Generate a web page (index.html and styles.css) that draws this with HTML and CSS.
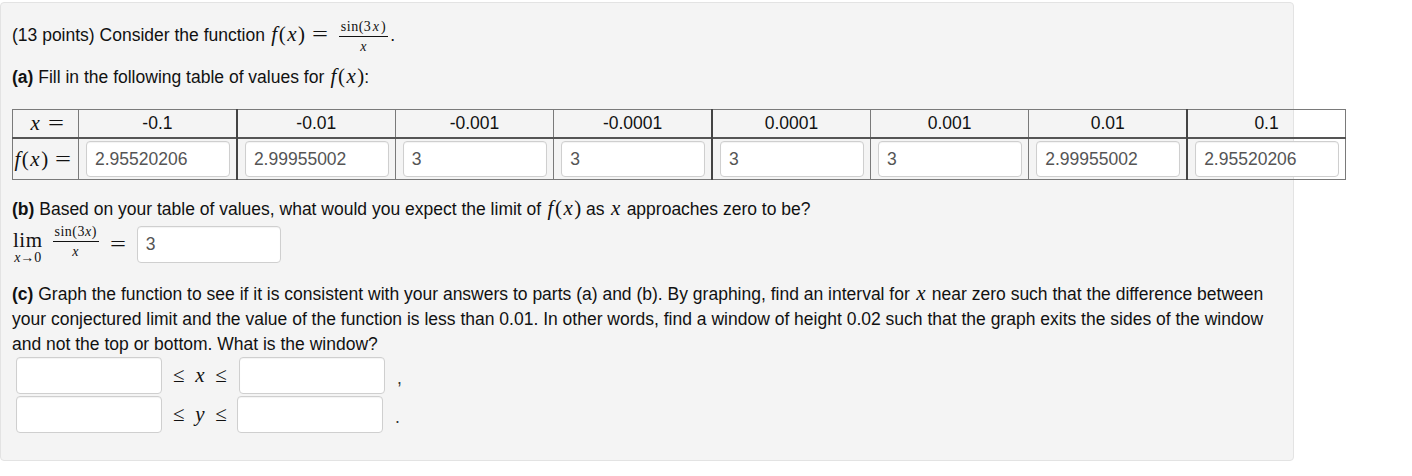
FILE: index.html
```html
<!DOCTYPE html>
<html>
<head>
<meta charset="utf-8">
<link rel="stylesheet" href="styles.css">
</head>
<body>
<div class="panel">
  <p class="intro">(13 points) Consider the function <span class="m"><i>f</i>(<i>x</i>)<span class="eq">=</span><span class="frac"><span class="num">sin(3<i>x</i>)</span><span class="den"><i>x</i></span></span></span>.</p>
  <p class="part-a"><b>(a)</b> Fill in the following table of values for <span class="m"><i>f</i>(<i>x</i>)</span>:</p>
  <table class="vals">
    <colgroup><col class="c0"><col span="8" class="cv"></colgroup>
    <tr class="hrow">
      <th><span class="m"><i>x</i><span class="eq eq2">=</span></span></th>
      <td>-0.1</td><td class="thick">-0.01</td><td>-0.001</td><td>-0.0001</td><td class="thick">0.0001</td><td>0.001</td><td>0.01</td><td class="thick">0.1</td>
    </tr>
    <tr class="vrow">
      <th class="flab"><span class="m"><i>f</i>(<i>x</i>)<span class="eq eq2">=</span></span></th>
      <td><input class="box" value="2.95520206"></td>
      <td class="thick"><input class="box" value="2.99955002"></td>
      <td><input class="box" value="3"></td>
      <td><input class="box" value="3"></td>
      <td class="thick"><input class="box" value="3"></td>
      <td><input class="box" value="3"></td>
      <td><input class="box" value="2.99955002"></td>
      <td class="thick"><input class="box" value="2.95520206"></td>
    </tr>
  </table>
  <p class="part-b"><b>(b)</b> Based on your table of values, what would you expect the limit of <span class="m"><i>f</i>(<i>x</i>)</span> as <span class="m"><i>x</i></span> approaches zero to be?</p>
  <div class="limrow">
    <span class="lim"><span class="limw">lim</span><span class="limsub"><i>x</i>→0</span></span>
    <span class="frac frac-b"><span class="num">sin(3<i>x</i>)</span><span class="den"><i>x</i></span></span>
    <span class="m"><span class="eq eq3">=</span></span>
    <input class="box box-b" value="3">
  </div>
  <p class="part-c"><b>(c)</b> Graph the function to see if it is consistent with your answers to parts (a) and (b). By graphing, find an interval for <span class="m"><i>x</i></span> near zero such that the difference between your conjectured limit and the value of the function is less than 0.01. In other words, find a window of height 0.02 such that the graph exits the sides of the window and not the top or bottom. What is the window?</p>
  <div class="winrow first">
    <input class="box box-w" value="">
    <span class="m rel">≤ <i>x</i> ≤</span>
    <input class="box box-w" value="">
    <span class="punct">,</span>
  </div>
  <div class="winrow">
    <input class="box box-w" value="">
    <span class="m rel rel-y">≤ <i>y</i> ≤</span>
    <input class="box box-w" value="">
    <span class="punct">.</span>
  </div>
</div>
</body>
</html>
```

FILE: styles.css
```css
html, body {
  margin: 0;
  padding: 0;
  background: #ffffff;
}
body {
  font-family: "Liberation Sans", Arial, sans-serif;
  font-size: 17.5px;
  color: #111;
}
.panel {
  margin: 2px 0 0 0;
  width: 1271px;
  height: 443px;
  padding: 14px 10px 0 11px;
  background: #f4f4f4;
  border: 1px solid #e3e3e3;
  border-radius: 4px;
}
p { margin: 0; line-height: 25px; }
b { font-weight: bold; }
.m {
  font-family: "Liberation Serif", "Times New Roman", serif;
  font-size: 21px;
}
.m i, .frac i, .limsub i { font-style: italic; }
.m i { padding: 0 1.5px; }
.eq {
  display: inline-block;
  transform: scaleX(1.35);
  margin: 0 11px 0 9px;
}
.frac {
  display: inline-flex;
  flex-direction: column;
  align-items: center;
  vertical-align: middle;
  font-family: "Liberation Serif", "Times New Roman", serif;
  font-size: 14px;
  line-height: 13px;
  margin: 0 2px;
  letter-spacing: 0.5px;
}
.frac .num {
  padding: 0 2px 3px;
  border-bottom: 1px solid #111;
}
.frac .den { padding-top: 3px; }
.intro { height: 34px; line-height: 34px; }
.part-a { margin-top: 13px; }
.vals {
  margin-top: 19px;
  border-collapse: collapse;
  table-layout: fixed;
  width: 1333px;
}
.c0 { width: 66px; }
.cv { width: 158.375px; }
.vals th, .vals td {
  border: 1px solid #7a7a7a;
  padding: 0;
  text-align: center;
  font-weight: normal;
}
.vals td.thick { border-left: 2px solid #444; }
.hrow td, .hrow th { height: 27px; }
.hrow { border-bottom: 2px solid #555; }
.vrow td { height: 40px; padding: 0 6px 0 7px; }
.vrow th { white-space: nowrap; text-align: left; padding-left: 0; }
.eq2 { margin: 0 0 0 9px; }
.box {
  display: block;
  box-sizing: border-box;
  width: 100%;
  height: 36px;
  padding: 0 8px;
  border: 1px solid #cfcfcf;
  border-radius: 4px;
  background: #fff;
  font-family: "Liberation Sans", Arial, sans-serif;
  font-size: 17.5px;
  color: #555;
  box-shadow: inset 0 1px 1px rgba(0,0,0,0.05);
}
.part-b { margin-top: 16px; }
.limrow {
  display: flex;
  align-items: center;
  height: 42px;
  margin-top: 1px;
}
.lim {
  display: inline-flex;
  flex-direction: column;
  align-items: center;
  font-family: "Liberation Serif", "Times New Roman", serif;
  margin: 8px 0 0 1px;
}
.limw { font-size: 21px; line-height: 19px; letter-spacing: 0.5px; }
.limsub { font-size: 14px; line-height: 16px; }
.frac-b { margin: -6px 0 0 10px; }
.eq3 { margin: 0 13px 0 13px; }
.box-b { width: 144px; height: 37px; }
.part-c { margin-top: 16px; }
.winrow {
  display: flex;
  align-items: center;
  padding-left: 4px;
}
.winrow.first { margin-top: 0; }
.winrow + .winrow { margin-top: 2px; }
.box-w { width: 146px; height: 37px; }
.rel { margin: 0 12px 0 11px; word-spacing: 4px; }
.rel-y { margin-right: 10px; }
.punct { margin-left: 12px; margin-top: 6px; color: #333; }
```
